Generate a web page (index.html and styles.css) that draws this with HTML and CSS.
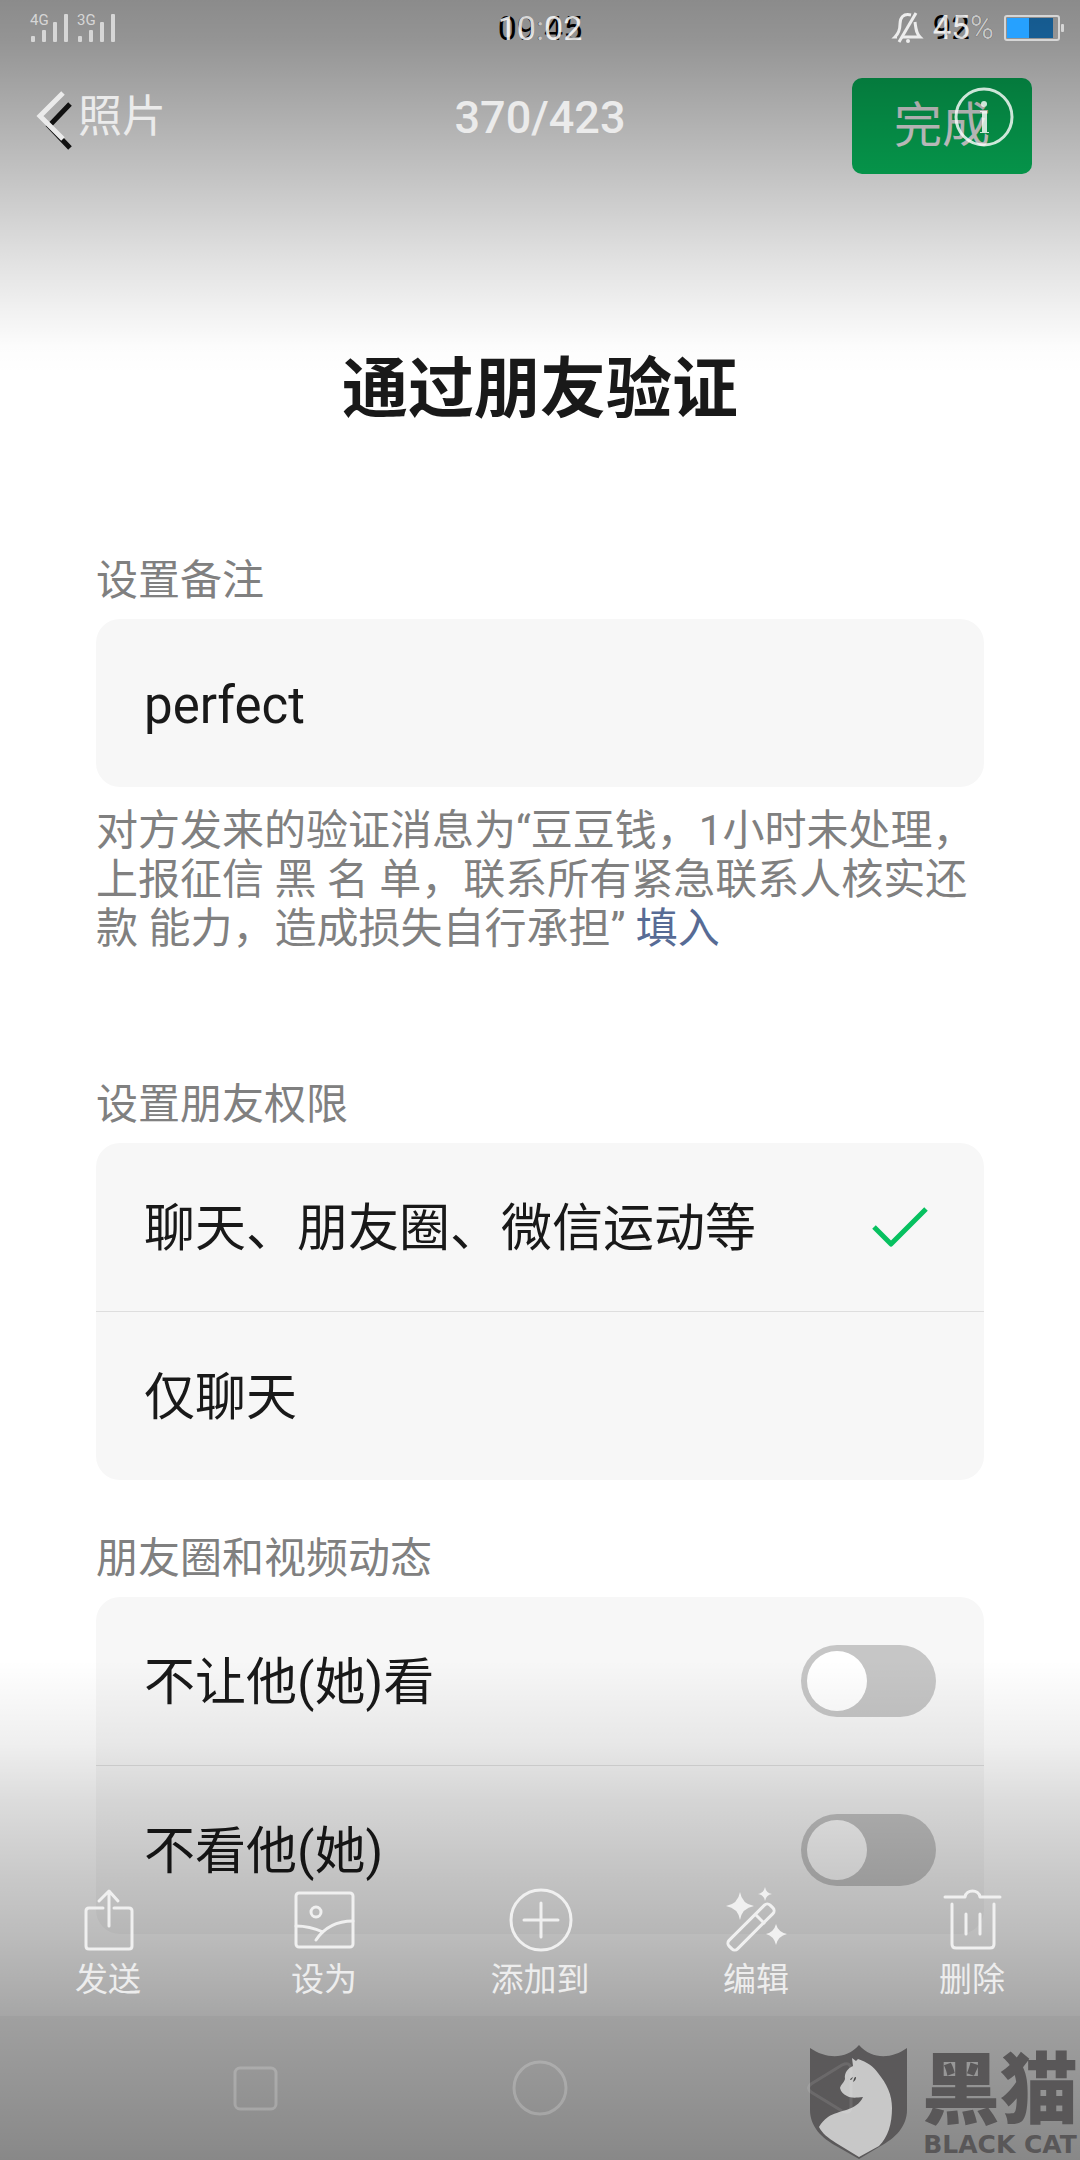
FILE: index.html
```html
<!doctype html>
<html lang="zh-CN">
<head>
<meta charset="utf-8">
<meta name="viewport" content="width=device-width, initial-scale=1">
<title>通过朋友验证</title>
	<link rel="stylesheet" href="styles.css">
</head>

<body>
	<!-- form page -->
	<main class="page">
		<div class="status page-status">
			<span></span>
			<span class="clock">09:45</span>
			<div class="status-right">
				<span class="percent">92%</span>
				<svg class="battery" viewBox="0 0 60 26"><path d="M3 3h46v20H3z" fill="#26a1ff"/></svg>
			</div>
		</div>
		<header class="page-header">
			<button class="back" aria-label="返回">
				<svg width="28" height="52" viewBox="0 0 28 52"><path d="M24 4 3 26l21 22" fill="none" stroke="#191919" stroke-width="5"/></svg>
			</button>
			<button class="done">完成</button>
		</header>

		<h1>通过朋友验证</h1>

		<form class="form">
			<section class="section remark">
				<label class="section-label" for="remark">设置备注</label>
				<input class="field" type="text" id="remark" value="perfect">
				<p class="message">对方发来的验证消息为“豆豆钱，1小时未处理，上报征信 黑 名 单，联系所有紧急联系人核实还款 能力，造成损失自行承担” <a href="#remark">填入</a></p>
			</section>

			<section class="section">
				<h2 class="section-label">设置朋友权限</h2>
				<div class="card">
					<label class="row" for="all">
						<span>聊天、朋友圈、微信运动等</span>
						<input type="radio" name="permission" id="all" class="radio" checked>
						<svg class="check" width="64" height="48" viewBox="0 0 64 48"><path d="m2 24 17 17L54 6" fill="none" stroke="#07c160" stroke-width="5" stroke-linejoin="round"/></svg>
					</label>
					<label class="row" for="chat">
						<span>仅聊天</span>
						<input type="radio" name="permission" id="chat" class="radio">
						<svg class="check" width="64" height="48" viewBox="0 0 64 48"><path d="m2 24 17 17L54 6" fill="none" stroke="#07c160" stroke-width="5" stroke-linejoin="round"/></svg>
					</label>
				</div>
			</section>

			<section class="section">
				<h2 class="section-label">朋友圈和视频动态</h2>
				<div class="card">
					<label class="row" for="hide-mine">
						<span>不让他(她)看</span>
						<input type="checkbox" id="hide-mine" class="toggle">
					</label>
					<label class="row" for="hide-theirs">
						<span>不看他(她)</span>
						<input type="checkbox" id="hide-theirs" class="toggle">
					</label>
				</div>
			</section>
		</form>
	</main>

	<!-- photo viewer controls, over the page -->
	<div class="viewer">
		<div class="status">
			<div class="signals">
				<svg width="88" height="30" viewBox="0 0 88 30">
					<g fill="#d6d6d6">
						<text x="0" y="12" class="net">4G</text>
						<rect x="1" y="23" width="4" height="6" rx="1"/>
						<rect x="12" y="17" width="4" height="12" rx="1"/>
						<rect x="23" y="9" width="4" height="20" rx="1"/>
						<rect x="34" y="1" width="4" height="28" rx="1"/>
						<text x="47" y="12" class="net">3G</text>
						<rect x="48" y="23" width="4" height="6" rx="1"/>
						<rect x="59" y="17" width="4" height="12" rx="1"/>
						<rect x="70" y="9" width="4" height="20" rx="1"/>
						<rect x="81" y="1" width="4" height="28" rx="1"/>
					</g>
				</svg>
			</div>
			<span class="clock">10<span class="dim">:</span>02</span>
			<div class="status-right">
				<svg class="bell" width="30" height="32" viewBox="0 0 30 32">
					<g fill="none" stroke="#ededed" stroke-width="3">
						<path d="M18 3C10 1 7 6 7 12c0 6-1 9-5 13h2M9 25h18c-4-4-4-8-5-15"/>
						<path d="M23 1 6 30"/>
					</g>
					<ellipse cx="15" cy="29" rx="2" ry="2" fill="#ededed"/>
				</svg>
				<span class="percent">45<span class="dim">%</span></span>
				<svg class="battery" viewBox="0 0 60 26">
					<rect x="1" y="1" width="54" height="24" rx="2" fill="none" stroke="#d6d6d6" stroke-width="2"/>
					<path d="M3 3h22v20H3z" fill="#26a1ff"/>
					<rect x="57" y="9" width="3" height="8" rx="1" fill="#d6d6d6"/>
				</svg>
			</div>
		</div>
		<header class="viewer-header">
			<button class="album">
				<svg width="30" height="54" viewBox="0 0 30 54"><path d="M27 3 4 26l23 23" fill="none" stroke="currentColor" stroke-width="5"/></svg>
				<span>照片</span>
			</button>
			<span class="count">370/423</span>
			<button class="info" aria-label="详情">
				<svg width="60" height="60" viewBox="0 0 60 60">
					<circle cx="30" cy="30" r="28" fill="none" stroke="currentColor" stroke-width="3"/>
					<circle cx="30" cy="17" r="3" fill="currentColor"/>
					<path d="M26 24h7v21h2v1h-9v-1h2V25h-2z" fill="currentColor"/>
				</svg>
			</button>
		</header>

		<div class="watermark">
			<svg width="98" height="115" viewBox="0 0 98 115">
				<path d="M0 3c16 11 36 12 49-3 13 15 33 14 48 3v62c0 16-11 28-28 37L49 114 28 102C11 93 0 81 0 65z" fill="#5b595a"/>
				<path d="m42 13 4 3 2-2c9 3 15 7 20 14 9 11 14 22 14 35 0 16-4 29-13 38l-20 11-23-14C18 93 12 88 9 82c2-4 5-7 9-10 10-7 29-6 35-20-8 1-13 1-16-1-4-2-6-4-7-8 1-4 4-5 5-9-1-6 3-11 8-13z" fill="#c8c8c8"/>
				<path d="M40 35c0-1 1-2 3-3-1 2-1 3-3 3zM43 37c1-3 1-5 3-5 0 2-1 4-3 5z" fill="#444"/>
			</svg>
			<div class="brand">
				<strong>黑猫</strong>
				<span>BLACK CAT</span>
			</div>
		</div>

		<div class="toolbar">
			<button>
				<svg width="72" height="64" viewBox="0 0 72 64"><path d="M31 20H17q-3 0-3 3v35q0 3 3 3h40q3 0 3-3V23q0-3-3-3H42M37 38V4M27 13 37 3l9 10"/></svg>
				<span>发送</span>
			</button>
			<button>
				<svg width="72" height="64" viewBox="0 0 72 64"><rect x="8" y="5" width="57" height="54" rx="3"/><circle cx="28" cy="24" r="5"/><path d="M8 38c10 0 18 2 27 6M28 52c8-12 20-19 37-19"/></svg>
				<span>设为</span>
			</button>
			<button>
				<svg width="72" height="64" viewBox="0 0 72 64"><circle cx="37" cy="32" r="30"/><path d="M20 32h34M37 15v34"/></svg>
				<span>添加到</span>
			</button>
			<button>
				<svg width="72" height="64" viewBox="0 0 72 64">
					<rect x="2" y="33" width="58" height="12" rx="4" transform="rotate(-45 31 39)"/>
					<path d="m36 27 8 8"/>
					<path class="solid" d="M20 4q2 12 14 14-12 2-14 14Q18 20 6 18 18 16 20 4zM45-1q1 6 7 7-6 1-7 7-1-6-7-7 6-1 7-7zM56 36q2 8 11 10-9 2-11 11-2-9-10-11 8-2 10-10z"/>
				</svg>
				<span>编辑</span>
			</button>
			<button>
				<svg width="72" height="64" viewBox="0 0 72 64"><path d="M9 9h20c1-8 14-8 15 0h20M16 16v40q0 4 4 4h34q4 0 4-4V16M30 26v20M44 26v20"/></svg>
				<span>删除</span>
			</button>
		</div>

		<nav class="keys">
			<button aria-label="最近任务"><svg width="60" height="60" viewBox="0 0 60 60"><rect x="10" y="10" width="41" height="41" rx="5"/></svg></button>
			<button aria-label="主页"><svg width="60" height="60" viewBox="0 0 60 60"><circle cx="30" cy="30" r="26"/></svg></button>
			<button aria-label="返回"><svg class="faint" width="60" height="60" viewBox="0 0 60 60"><path d="M16 26 47 7q8-4 9 4v38q-1 8-9 4L16 34q-5-4 0-8z"/></svg></button>
		</nav>
	</div>
</body>
</html>
```

FILE: styles.css
```css
*{box-sizing: border-box;}
body{
	position: relative;
	min-height: 100vh;
	margin: 0;
	background-color: #fff;
	color: #191919;
	font-family: Roboto, "Noto Sans CJK SC", sans-serif;
}
button{
	border: none;
	background: none;
	padding: 0;
	color: inherit;
	font-family: inherit;
	cursor: pointer;
}
svg{
	display: block;
	overflow: visible;
}

/* status bar */
.status{
	display: grid;
	grid-template-columns: 1fr auto 1fr;
	align-items: center;
	height: 56px;
	padding: 0 16px;
	font-size: 34px;
}
.page-status{
	color: #000;
}
.status-right{
	display: flex;
	align-items: center;
	justify-content: flex-end;
}
.battery{
	width: 60px;
	height: 26px;
	margin-left: 10px;
}
.percent{
	font-size: 33px;
	line-height: 40px;
}
.signals{
	padding-left: 14px;
}
.net{
	font-size: 15px;
}
.bell{
	margin-right: 10px;
}
.dim{
	color: #c6c6c6;
}

/* form page */
.page-header{
	display: flex;
	align-items: center;
	justify-content: space-between;
	padding: 22px 48px 0 46px;
}
.done{
	width: 180px;
	height: 96px;
	border-radius: 10px;
	background-color: #07c160;
	color: #fff;
	font-size: 48px;
	line-height: 96px;
}
h1{
	margin: 176px 0 125px;
	font-size: 66px;
	font-weight: 700;
	line-height: 80px;
	text-align: center;
}
.form{
	padding: 0 96px;
}
.section{
	margin-bottom: 53px;
}
.remark{
	margin-bottom: 126px;
}
.section-label{
	display: block;
	margin: 0 0 12px;
	color: #808080;
	font-size: 42px;
	font-weight: 400;
	line-height: 52px;
}
.field{
	display: block;
	width: 100%;
	height: 168px;
	padding: 4px 48px 0;
	border: none;
	border-radius: 24px;
	background-color: #f7f7f7;
	color: inherit;
	font-family: inherit;
	font-size: 51px;
}
.message{
	margin: 19px 0 0;
	color: #808080;
	font-size: 42px;
	line-height: 49px;
}
.message a{
	color: #576b95;
	text-decoration: none;
}
.card{
	overflow: hidden;
	border-radius: 24px;
	background-color: #f7f7f7;
}
.row{
	display: flex;
	align-items: center;
	justify-content: space-between;
	height: 168px;
	padding: 0 48px;
	font-size: 51px;
	line-height: 60px;
	cursor: pointer;
}
.row span{
	padding-top: 4px;
}
.row + .row{
	height: 169px;
	border-top: 1px solid #dedede;
}
.radio{
	position: absolute;
	opacity: 0;
}
.check{
	visibility: hidden;
}
.radio:checked + .check{
	visibility: visible;
}
.toggle{
	appearance: none;
	width: 135px;
	height: 72px;
	margin: 0;
	padding: 6px;
	border-radius: 36px;
	background-color: #c6c6c6;
}
.toggle::before{
	content: "";
	display: block;
	width: 60px;
	height: 60px;
	border-radius: 50%;
	background-color: #fff;
}
.toggle:checked{
	background-color: #07c160;
}
.toggle:checked::before{
	margin-left: auto;
}

/* photo viewer */
.viewer{
	position: absolute;
	inset: 0;
	display: flex;
	flex-direction: column;
	color: rgba(255, 255, 255, 0.8);
	background-image:
		linear-gradient(to bottom, rgba(0,0,0,0.455) 0, rgba(0,0,0,0.42) 40px, rgba(0,0,0,0.37) 78px, rgba(0,0,0,0.24) 173px, rgba(0,0,0,0.12) 257px, rgba(0,0,0,0.05) 313px, rgba(0,0,0,0.01) 347px, transparent 375px),
		linear-gradient(to top, rgba(0,0,0,0.467) 0, rgba(0,0,0,0.373) 144px, rgba(0,0,0,0.35) 144px, rgba(0,0,0,0.263) 226px, rgba(0,0,0,0.216) 280px, rgba(0,0,0,0.137) 360px, rgba(0,0,0,0.063) 417px, transparent 500px);
}
.viewer .clock,
.viewer .percent{
	color: rgba(255, 255, 255, 0.85);
}
.viewer .dim{
	color: #c6c6c6;
}
.viewer-header{
	display: grid;
	grid-template-columns: 1fr auto 1fr;
	align-items: center;
	height: 122px;
	padding: 0 36px;
}
.album{
	display: flex;
	align-items: center;
	gap: 12px;
	color: #ebebeb;
	font-size: 44px;
	line-height: 54px;
}
.count{
	color: #ebebeb;
	font-size: 45px;
	font-weight: 500;
}
.info{
	justify-self: end;
	margin-right: 30px;
}
.toolbar{
	display: grid;
	grid-template-columns: repeat(5, 1fr);
	margin-top: auto;
	padding-bottom: 12px;
	color: #ededed;
}
.toolbar button{
	display: flex;
	flex-direction: column;
	align-items: center;
	gap: 4px;
	font-size: 33px;
	line-height: 48px;
}
.toolbar svg{
	fill: none;
	stroke: #f0f0f0;
	stroke-width: 3;
	stroke-linecap: round;
	stroke-linejoin: round;
}
.toolbar .solid{
	fill: #f0f0f0;
	stroke: none;
}
.keys{
	position: relative;
	display: flex;
	align-items: center;
	justify-content: center;
	gap: 225px;
	height: 144px;
}
.keys svg{
	fill: none;
	stroke: rgba(255, 255, 255, 0.2);
	stroke-width: 3;
}
.keys .faint{
	stroke: rgba(255, 255, 255, 0.1);
}
.watermark{
	position: absolute;
	right: 2px;
	bottom: 0;
	display: flex;
	align-items: flex-end;
	gap: 14px;
	color: #595758;
}
.brand{
	display: flex;
	flex-direction: column;
	align-items: center;
}
.brand strong{
	font-size: 78px;
	font-weight: 900;
	line-height: 76px;
}
.brand span{
	font-family: "DejaVu Sans", sans-serif;
	font-size: 25px;
	font-weight: 700;
	line-height: 30px;
}
```
